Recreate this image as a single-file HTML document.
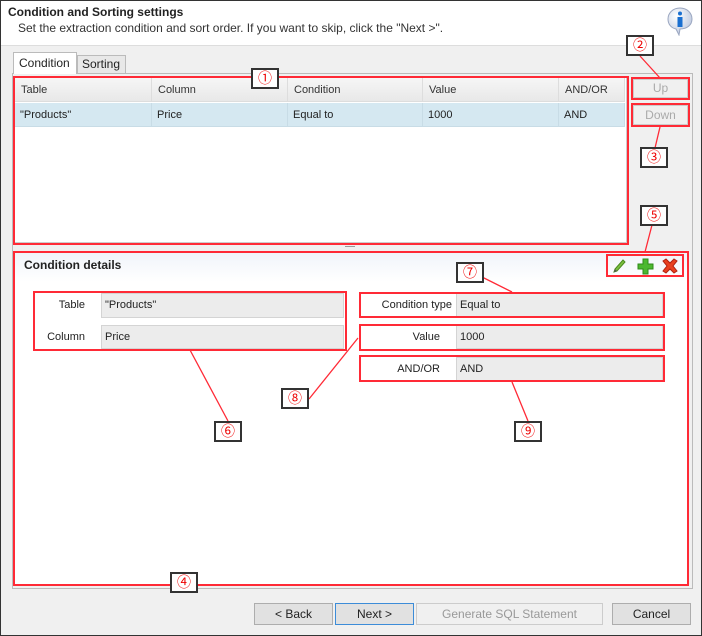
<!DOCTYPE html>
<html><head><meta charset="utf-8"><style>
*{box-sizing:border-box;margin:0;padding:0}
body{width:702px;height:636px;position:relative;overflow:hidden;font-family:"Liberation Sans","Noto Sans CJK JP",sans-serif;font-size:11px;color:#222;background:#f0f0f0}
.a{position:absolute}
.rb{position:absolute;border:2px solid #ff2a36}
.badge{position:absolute;width:28px;height:21px;background:#fff;border:2px solid #333;color:#e00;font-size:14px;text-align:center;line-height:17px;font-family:"Noto Sans CJK JP",sans-serif}
.fld{position:absolute;background:#ececec;border:1px solid #d4d4d4;padding-left:3px;line-height:23px}
.lbl{position:absolute;text-align:right;line-height:24px}
.btn{position:absolute;height:22px;border:1px solid #adadad;background:#e1e1e1;text-align:center;line-height:20px;font-size:12px}
.th{position:absolute;top:0;height:24px;line-height:24px;padding-left:6px;border-right:1px solid #ddd;color:#333}
.td{position:absolute;top:0;height:24px;line-height:24px;padding-left:5px;border-right:1px solid #c8dce6}
</style></head><body>
<div class="a" style="left:0;top:0;width:702px;height:636px;border:1px solid #333;z-index:50;pointer-events:none"></div>
<div class="a" style="left:0;top:0;width:702px;height:46px;background:#fff;border-bottom:1px solid #ddd"></div>
<div class="a" style="left:8px;top:5px;font-weight:bold;font-size:12px">Condition and Sorting settings</div>
<div class="a" style="left:18px;top:21px;font-size:12px;color:#333">Set the extraction condition and sort order. If you want to skip, click the "Next &gt;".</div>
<svg class="a" style="left:666px;top:6px" width="28" height="30" viewBox="0 0 28 30"><defs><radialGradient id="g" cx="0.35" cy="0.3" r="0.8"><stop offset="0" stop-color="#fff"/><stop offset="1" stop-color="#b8c4dc"/></radialGradient></defs><path d="M14 2C7 2 2 7 2 13c0 5 3 9 8 10l3 6 1-6c7 0 12-4 12-10S21 2 14 2z" fill="url(#g)" stroke="#9aa6c0"/><circle cx="14" cy="7.5" r="2" fill="#1a6fd0"/><rect x="11.5" y="11" width="5" height="10" fill="#1a6fd0"/></svg>

<div class="a" style="left:77px;top:55px;width:49px;height:19px;background:#e8e8e8;border:1px solid #bbb;font-size:12px;padding-left:4px;line-height:17px">Sorting</div>
<div class="a" style="left:13px;top:52px;width:64px;height:22px;background:#fff;border:1px solid #bbb;border-bottom:none;font-size:12px;padding-left:5px;line-height:20px;z-index:2">Condition</div>
<div class="a" style="left:12px;top:73px;width:681px;height:516px;border:1px solid #bbb;background:#f0f0f0"></div>

<div class="a" style="left:14px;top:77px;width:613px;height:166px;background:#fff;border:1px solid #ccc"></div>
<div class="a" style="left:15px;top:78px;width:610px;height:24px;background:linear-gradient(#f6f6f6,#e8e8e8);border-bottom:1px solid #ddd">
<div class="th" style="left:0;width:137px">Table</div><div class="th" style="left:137px;width:136px">Column</div><div class="th" style="left:273px;width:135px">Condition</div><div class="th" style="left:408px;width:136px">Value</div><div class="th" style="left:544px;width:66px">AND/OR</div></div>
<div class="a" style="left:15px;top:103px;width:610px;height:24px;background:#d5e8f1;border-bottom:1px solid #c8dce6">
<div class="td" style="left:0;width:137px">"Products"</div><div class="td" style="left:137px;width:136px">Price</div><div class="td" style="left:273px;width:135px">Equal to</div><div class="td" style="left:408px;width:136px">1000</div><div class="td" style="left:544px;width:66px">AND</div></div>
<div class="rb" style="left:13px;top:76px;width:616px;height:169px"></div>

<div class="btn" style="left:633px;top:79px;width:55px;height:19px;color:#aaa;background:#f0f0f0;border-color:#ccc;line-height:17px">Up</div>
<div class="rb" style="left:631px;top:77px;width:59px;height:23px"></div>
<div class="btn" style="left:633px;top:105px;width:55px;height:20px;color:#aaa;background:#f0f0f0;border-color:#ccc;line-height:18px">Down</div>
<div class="rb" style="left:631px;top:103px;width:59px;height:24px"></div>

<div class="a" style="left:345px;top:246px;width:10px;height:1px;background:#999"></div>

<div class="a" style="left:14px;top:252px;width:674px;height:333px;background:linear-gradient(#f0f4fa 0,#fff 30px,#fff)"></div>
<div class="a" style="left:24px;top:258px;font-weight:bold;font-size:12px">Condition details</div>
<svg class="a" style="left:608px;top:256px" width="74" height="19" viewBox="0 0 74 19">
<path d="M9 15l-3 1 1-3 8-9 2 2z" fill="#7cc040" stroke="#4a8a20"/><path d="M6 16l1-3 2 2z" fill="#555"/>
<path d="M35 3h5v5h5v5h-5v5h-5v-5h-5v-5h5z" fill="#4cb830" stroke="#2e8a1a"/>
<path d="M55 5l3-2 4 4 4-4 3 2-4 5 4 5-3 2-4-4-4 4-3-2 4-5z" fill="#e84020" stroke="#b02010"/>
</svg>
<div class="rb" style="left:606px;top:254px;width:78px;height:23px"></div>

<div class="lbl" style="left:35px;top:293px;width:50px">Table</div>
<div class="fld" style="left:101px;top:293px;width:243px;height:25px">"Products"</div>
<div class="lbl" style="left:35px;top:325px;width:50px">Column</div>
<div class="fld" style="left:101px;top:325px;width:243px;height:24px">Price</div>
<div class="rb" style="left:33px;top:291px;width:314px;height:60px"></div>

<div class="lbl" style="left:360px;top:293px;width:92px">Condition type</div>
<div class="fld" style="left:456px;top:293px;width:207px;height:24px">Equal to</div>
<div class="rb" style="left:359px;top:292px;width:306px;height:26px"></div>
<div class="lbl" style="left:360px;top:325px;width:80px">Value</div>
<div class="fld" style="left:456px;top:325px;width:207px;height:24px">1000</div>
<div class="rb" style="left:359px;top:324px;width:306px;height:27px"></div>
<div class="lbl" style="left:360px;top:357px;width:80px">AND/OR</div>
<div class="fld" style="left:456px;top:357px;width:207px;height:24px">AND</div>
<div class="rb" style="left:359px;top:355px;width:306px;height:27px"></div>

<div class="rb" style="left:13px;top:251px;width:676px;height:335px"></div>

<svg class="a" style="left:0;top:0;z-index:5" width="702" height="636"><g stroke="#ff2a36" stroke-width="1.3">
<line x1="640" y1="56" x2="660" y2="78"/><line x1="655" y1="148" x2="660" y2="127"/><line x1="652" y1="225" x2="645" y2="252"/>
<line x1="480" y1="276" x2="512" y2="292"/><line x1="309" y1="399" x2="358" y2="338"/><line x1="228" y1="421" x2="190" y2="350"/><line x1="528" y1="421" x2="512" y2="382"/></g></svg>

<div class="badge" style="left:251px;top:68px;z-index:6">①</div>
<div class="badge" style="left:626px;top:35px;z-index:6">②</div>
<div class="badge" style="left:640px;top:147px;z-index:6">③</div>
<div class="badge" style="left:170px;top:572px;z-index:6">④</div>
<div class="badge" style="left:640px;top:205px;z-index:6">⑤</div>
<div class="badge" style="left:214px;top:421px;z-index:6">⑥</div>
<div class="badge" style="left:456px;top:262px;z-index:6">⑦</div>
<div class="badge" style="left:281px;top:388px;z-index:6">⑧</div>
<div class="badge" style="left:514px;top:421px;z-index:6">⑨</div>

<div class="btn" style="left:254px;top:603px;width:79px">&lt; Back</div>
<div class="btn" style="left:335px;top:603px;width:79px;border-color:#3c8cd8">Next &gt;</div>
<div class="btn" style="left:416px;top:603px;width:187px;color:#999;background:#f0f0f0;border-color:#ccc">Generate SQL Statement</div>
<div class="btn" style="left:612px;top:603px;width:79px">Cancel</div>
</body></html>
